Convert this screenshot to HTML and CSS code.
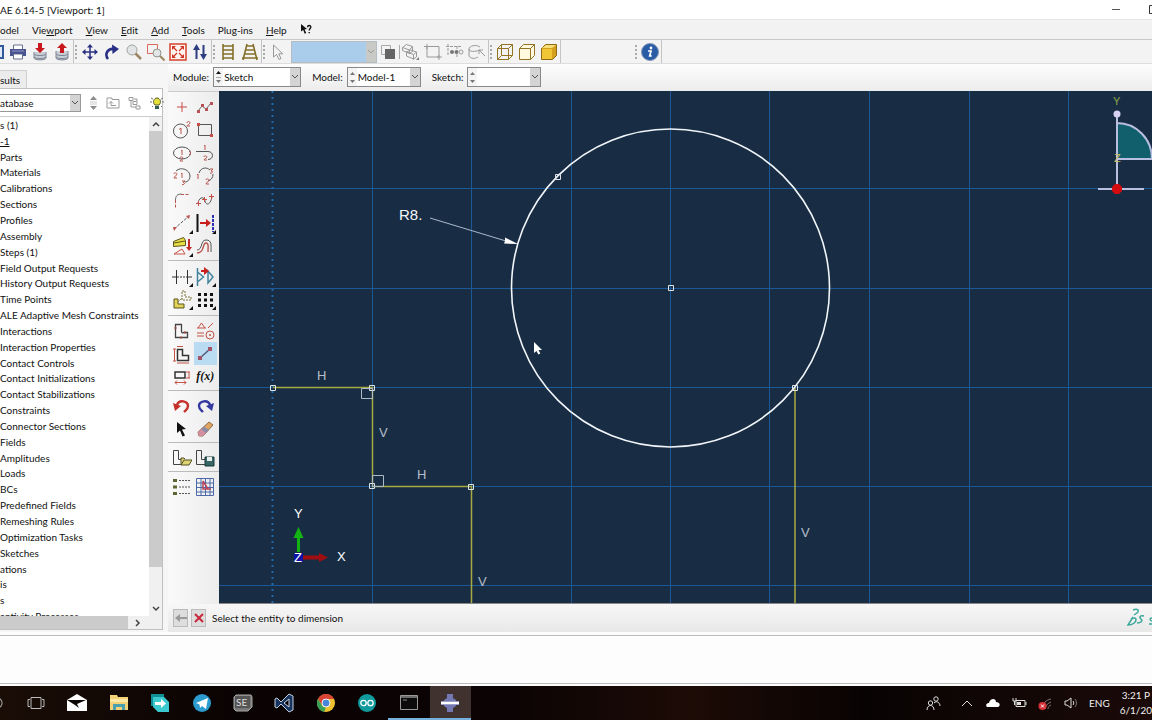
FILE: index.html
```html
<!DOCTYPE html>
<html lang="en">
<head>
  <meta charset="UTF-8">
  <meta name="viewport" content="width=device-width, initial-scale=1.0">
  <title>Abaqus/CAE 6.14-5 [Viewport: 1]</title>
  <link rel="stylesheet" href="styles.css">
</head>
<body>
<div class="app">

  <header class="titlebar">
    <span>AE 6.14-5 [Viewport: 1]</span>
    <div class="window-buttons">
      <button aria-label="Minimize"><svg width="9" height="9"><path d="M0 4.500h8" stroke="#555"/></svg></button>
      <button aria-label="Maximize"><svg width="9" height="9"><path d="M.5 .5h8v8h-8z" stroke="#333"/></svg></button>
    </div>
  </header>

  <nav class="menubar">
    <button>odel</button>
    <button>Vie<u>w</u>port</button>
    <button><u>V</u>iew</button>
    <button><u>E</u>dit</button>
    <button><u>A</u>dd</button>
    <button><u>T</u>ools</button>
    <button>Plu<u>g</u>-ins</button>
    <button><u>H</u>elp</button>
    <button aria-label="Help on context"><svg width="12" height="12" viewBox="0 0 12 12"><path d="M1 0l6 5-2.500.4 1.800 3.600-1.600.7-1.500-3.700L1 7.500z" fill="#111"/><path d="M7.500 3.200c.2-2.200 3.500-2.200 3.300 0-.1 1.200-1.600 1.500-1.600 3.200M9.200 8v1.300" stroke="#111" stroke-width="1.400"/></svg></button>
  </nav>

  <!-- main toolbar -->
  <div class="toolbar">
    <div class="group">
      <button class="cut" aria-label="Save"><svg width="7" height="18"><path d="M0 3h3v12H0" fill="#dfe8f5" stroke="#30589a" stroke-width="2"/></svg></button>
      <button aria-label="Print"><svg viewBox="0 0 18 18"><path d="M4.500 6V2h9v4M4.500 11h9v5h-9z" fill="#fff" stroke="#66708c"/><path d="M1 6h16v7h-3v-2H4v2H1z" fill="#4a5590"/><path d="M3 8h12" stroke="#8e98c8"/></svg></button>
      <button aria-label="Import"><svg viewBox="0 0 18 18"><path d="M3 9v6c0 2.500 12 2.500 12 0V9" fill="#c9ced6" stroke="#7b8594"/><path d="M3 11c1 2 11 2 12 0M3 14c1 2 11 2 12 0" stroke="#7b8594"/><path d="M7 0h4v5h3L9 10 4 5h3z" fill="#c8171d"/></svg></button>
      <button aria-label="Export"><svg viewBox="0 0 18 18"><path d="M3 8v7c0 2.500 12 2.500 12 0V8" fill="#c9ced6" stroke="#7b8594"/><path d="M3 11c1 2 11 2 12 0M3 14c1 2 11 2 12 0" stroke="#7b8594"/><path d="M7 10h4V5h3L9 0 4 5h3z" fill="#c8171d"/></svg></button>
    </div>
    <div class="group grip">
      <button aria-label="Pan view"><svg viewBox="0 0 18 18"><path d="M9 3v12M3 9h12" stroke="#2b3181" stroke-width="1.500"/><path d="M9 1l3 3.500H6zM9 17l3-3.500H6zM1 9l3.500-3v6zM17 9l-3.500-3v6z" fill="#2b3181"/></svg></button>
      <button aria-label="Rotate view"><svg viewBox="0 0 18 18"><path d="M5 16C1 11 5 5 11 6" stroke="#2a2f86" stroke-width="2.600"/><path d="M9 1.500L16 6l-6.500 5z" fill="#2a2f86"/></svg></button>
      <button aria-label="Magnify view"><svg viewBox="0 0 18 18"><path d="M10 10l6 6" stroke="#9a8660" stroke-width="2.500"/><circle cx="7" cy="7" r="5" fill="#e2e5e6" stroke="#a2a49e"/></svg></button>
      <button aria-label="Box zoom view"><svg viewBox="0 0 18 18"><path d="M.5 1.500h10v9H.5z" stroke="#d8695c"/><path d="M12.500 12.500l5 5" stroke="#9a8660" stroke-width="2"/><circle cx="10" cy="10" r="4" fill="#e2e5e6" stroke="#94958e"/></svg></button>
      <button aria-label="Auto-fit view"><svg viewBox="0 0 18 18"><path d="M1 1h16v16H1z" fill="#fff3ef" stroke="#d3432d" stroke-width="1.500"/><path d="M3 3h4L3 7zM15 3v4l-4-4zM3 15v-4l4 4zM15 15h-4l4-4z" fill="#cf3524"/><path d="M4 4l4 4M14 4l-4 4M4 14l4-4M14 14l-4-4" stroke="#cf3524" stroke-width="1.200"/></svg></button>
      <button aria-label="Cycle views"><svg viewBox="0 0 18 18"><path d="M5.500 16V5M12.500 2v11" stroke="#2d3d82" stroke-width="2"/><path d="M5.500 1L9 7H2zM12.500 17L9 11h7z" fill="#2d3d82"/></svg></button>
    </div>
    <div class="group grip">
      <button aria-label="Parallel view"><svg viewBox="0 0 18 18"><path d="M4 1v16M14 1v16M4 3h10M4 7h10M4 11h10M4 15h10" stroke="#85702a" stroke-width="1.600"/></svg></button>
      <button aria-label="Perspective view"><svg viewBox="0 0 18 18"><path d="M6 1L2 17M12 1l4 16M5 3h8M4 7h10M3 11h12M1 15h16" stroke="#85702a" stroke-width="1.600"/></svg></button>
    </div>
    <div class="group grip">
      <button aria-label="Select"><svg viewBox="0 0 18 18"><path d="M4.500 2v12l3-2.500 2.500 5 2-1-2.300-4.700h4z" fill="#f4f4f4" stroke="#999"/></svg></button>
      <select class="filter" aria-label="Selection filter"><option></option></select>
      <button aria-label="Selection options"><svg viewBox="0 0 18 18"><path d="M2.500 2.500h9v9h-9z" stroke="#aaa"/><path d="M6 6h10v10H6z" fill="#666"/></svg></button>
      <i class="rule"></i>
      <button aria-label="Drag shape"><svg viewBox="0 0 18 18"><path d="M.5 4.500l4-3 6 2v5l-3 2-7-3zM.5 4.500l7 2.500 3-3.500M4.500 9l4-2 6 2v5l-3 2-7-3zM4.500 9l7 2.500 3-2.500M11.500 11.500v5M7.500 7v4" stroke="#999"/><path d="M17 14v3h-3z" fill="#777"/></svg></button>
      <button aria-label="Entity select"><svg viewBox="0 0 18 18"><path d="M3 3.500h12V14H3zM0 3.500h5M3 1v5M13 14h5M15 12v5" stroke="#999"/></svg></button>
      <button aria-label="Selection scope"><svg viewBox="0 0 18 18"><path d="M2 1v12M0 3.500h16M11 3v12" stroke="#999" stroke-dasharray="3 1"/><circle cx="6" cy="9" r="2" fill="#777"/><circle cx="10.500" cy="9" r="2" fill="#777"/><circle cx="15" cy="9" r="2" stroke="#999"/></svg></button>
      <button aria-label="Select closest"><svg viewBox="0 0 18 18"><path d="M12 4C8 1 1 3 1 6s6 3 11 1M1 6v7c2 3 6 3 9 1M11 7l6 6M11 7v4M11 7h4" stroke="#999"/></svg></button>
    </div>
    <div class="group grip">
      <button aria-label="Wireframe"><svg viewBox="0 0 18 18"><path d="M1.500 5.500h11v11h-11zM5.500 1.500h11v11h-11zM1.500 5.500l4-4M12.500 5.500l4-4M1.500 16.500l4-4M12.500 16.500l4-4" stroke="#947322"/></svg></button>
      <button aria-label="Hidden"><svg viewBox="0 0 18 18"><path d="M1.500 5.500h11v11h-11zM1.500 5.500l4-4h11v11l-4 4M12.500 5.500l4-4" fill="#fff9e0" stroke="#947322"/></svg></button>
      <button aria-label="Shaded"><svg viewBox="0 0 18 18"><path d="M1.500 5.500l4-4h11v11l-4 4h-11z" fill="#d4a01e" stroke="#8e6a12"/><path d="M2 6h10v10H2z" fill="#f0c637"/><path d="M2 5l4-3h10l-4 3z" fill="#f8de78"/></svg></button>
    </div>
    <div class="group grip info">
      <button aria-label="Query information"><svg viewBox="0 0 18 18"><circle cx="9" cy="9" r="8.500" fill="#2a5ca6" stroke="#8496b4"/><circle cx="10" cy="5" r="1.400" fill="#fff"/><path d="M7 8h3l-1.300 5h2" stroke="#fff" stroke-width="1.700"/></svg></button>
    </div>
  </div>

  <main class="workspace">

    <aside class="side">
      <div class="tabs"><button>sults</button></div>
      <div class="panel">
        <div class="panel-head">
          <select class="combo" aria-label="Database"><option>atabase</option></select>
          <button aria-label="Previous or next"><svg width="9" height="16" viewBox="0 0 9 16"><path d="M4.500 1L8 5H1zM4.500 15L8 11H1z" fill="#8b8b8b"/><path d="M1 7h7M1 9h7" stroke="#ccc"/></svg></button>
          <button aria-label="Up one level"><svg width="14" height="14" viewBox="0 0 14 14"><path d="M1 3.500V2h5v1.500h7v8.500H1zM10 9.500H5V5.500M3 7.500l2-2 2 2" stroke="#999"/></svg></button>
          <button aria-label="Link tree"><svg width="14" height="14" viewBox="0 0 14 14"><path d="M1 1.500h4v3H1zM5 5.500h4v3H5zM8 10h4v3H8zM3 4.500V11h5M6 3h3v2" stroke="#999"/></svg></button>
          <button aria-label="Tip"><svg width="14" height="14" viewBox="0 0 14 14"><path d="M1 2l2 1M13 2l-2 1M0 6h2M14 6h-2M2 11l1-1M12 11l-1-1" stroke="#777"/><path d="M5 9C2 6 4 2 7 2s5 4 2 7z" fill="#e4e23a" stroke="#55582c"/><path d="M5 10h4v3H5z" fill="#2f5d54"/></svg></button>
        </div>
        <div class="tree-row">
          <ul class="tree">
            <li>s (1)</li>
            <li><u>-1</u></li>
            <li>Parts</li>
            <li>Materials</li>
            <li>Calibrations</li>
            <li>Sections</li>
            <li>Profiles</li>
            <li>Assembly</li>
            <li>Steps (1)</li>
            <li>Field Output Requests</li>
            <li>History Output Requests</li>
            <li>Time Points</li>
            <li>ALE Adaptive Mesh Constraints</li>
            <li>Interactions</li>
            <li>Interaction Properties</li>
            <li>Contact Controls</li>
            <li>Contact Initializations</li>
            <li>Contact Stabilizations</li>
            <li>Constraints</li>
            <li>Connector Sections</li>
            <li>Fields</li>
            <li>Amplitudes</li>
            <li>Loads</li>
            <li>BCs</li>
            <li>Predefined Fields</li>
            <li>Remeshing Rules</li>
            <li>Optimization Tasks</li>
            <li>Sketches</li>
            <li>ations</li>
            <li>is</li>
            <li>s</li>
            <li>aptivity Processes</li>
          </ul>
          <div class="vscroll">
            <button aria-label="Scroll up"><svg width="8" height="6"><path d="M1 5l3-3 3 3" stroke="#444" stroke-width="1.500"/></svg></button>
            <div class="thumb"></div>
            <button aria-label="Scroll down"><svg width="8" height="6"><path d="M1 1l3 3 3-3" stroke="#444" stroke-width="1.500"/></svg></button>
          </div>
        </div>
        <div class="hscroll">
          <div class="thumb"></div>
          <button aria-label="Scroll right"><svg width="6" height="8"><path d="M1 1l3 3-3 3" stroke="#444" stroke-width="1.500"/></svg></button>
        </div>
      </div>
    </aside>

    <section class="main">
      <div class="context">
        <label for="module">Module:</label>
        <div class="picker picker-module"><svg width="7" height="14"><path d="M3.500 1L6 4H1z" fill="#111"/><path d="M3.500 13L6 10H1z" fill="#777"/><path d="M1 7.500h5" stroke="#aaa"/></svg><select class="combo" id="module"><option>Sketch</option></select></div>
        <label for="model">Model:</label>
        <div class="picker"><svg width="7" height="14"><path d="M3.500 2L6 5H1zM3.500 13L6 10H1z" fill="#777"/></svg><select class="combo" id="model"><option>Model-1</option></select></div>
        <label for="sketch">Sketch:</label>
        <div class="picker"><svg width="7" height="14"><path d="M3.500 2L6 5H1zM3.500 13L6 10H1z" fill="#777"/></svg><select class="combo" id="sketch"><option></option></select></div>
      </div>

      <div class="stage">
        <div class="toolbox">
          <div class="tools draw-tools">
            <button aria-label="Create isolated point"><svg viewBox="0 0 20 20"><path d="M10 5v10M5 10h10" stroke="#c84c48"/></svg></button>
            <button aria-label="Create lines"><svg viewBox="0 0 20 20"><path d="M3 14l4-5 4 3 6-7" stroke="#666"/><path d="M2 13h3v3H2zM6 7h3v3H6zM10 11h3v3h-3zM15 5h3v3h-3z" fill="#b85058"/></svg></button>
            <button aria-label="Create circle"><svg viewBox="0 0 20 20"><circle cx="8.500" cy="11" r="7" stroke="#555"/><path d="M7 9.500L9 8v6M15 3c0-2 3-2 3 0 0 1-3 2-3 3h3" stroke="#b9544f"/></svg></button>
            <button aria-label="Create rectangle"><svg viewBox="0 0 20 20"><path d="M3.500 4.500h13v11h-13z" stroke="#555"/><path d="M2 3h3v3H2zM15 14h3v3h-3z" fill="#c84c48"/></svg></button>
            <button aria-label="Create ellipse"><svg viewBox="0 0 20 20"><ellipse cx="10" cy="10" rx="8.500" ry="6" stroke="#555"/><path d="M9 8l1-1v5M8 15c0-2 3-1 3 0 0 1-3 2-3 3h3M17 8l2 2-2 2" stroke="#b9544f"/></svg></button>
            <button aria-label="Create tangent arc"><svg viewBox="0 0 20 20"><path d="M1 8.500h12c6 0 6 8 0 8" stroke="#555"/><path d="M9 3l1-1v5M9 14c0-2 3-1 3 0 0 1-3 2-3 3h3" stroke="#b9544f"/></svg></button>
            <button aria-label="Create arc by center"><svg viewBox="0 0 20 20"><path d="M4 5c5-5 14-1 14 5 0 3-2 6-5 6" stroke="#555"/><path d="M9 8l1-1v5M2 8c0-2 3-1 3 0 0 1-3 3-3 4h3M10 15h3l-2 1.500c3 0 1 3-1 2" stroke="#b9544f"/></svg></button>
            <button aria-label="Create arc by points"><svg viewBox="0 0 20 20"><path d="M4 7c2-6 8-6 11-3M18 8c0 4-2 6-5 7" stroke="#555"/><path d="M2 9l1-1v5M15 3h3l-2 2c3 0 1 3-1 2M11 14c0-2 3-1 3 0 0 1-3 3-3 4h3" stroke="#b9544f"/></svg></button>
            <button aria-label="Create fillet"><svg viewBox="0 0 20 20"><path d="M3.500 11v-1c0-4 2-6 6-6" stroke="#666"/><path d="M9 4.500h9M3.500 10v8" stroke="#b9544f" stroke-dasharray="3 1.500"/></svg></button>
            <button aria-label="Create spline"><svg viewBox="0 0 20 20"><path d="M3 13c1-6 6-7 7-2s6 4 7-5" stroke="#555"/><path d="M1 13.500h5M3.500 11v5M7 9.500h5M9.500 7v5M14 6.500h5M16.500 4v5" stroke="#c84c48"/></svg></button>
            <button class="more" aria-label="Create construction line"><svg viewBox="0 0 20 20"><path d="M2 16L17 3" stroke="#556" stroke-dasharray="3 1.500"/><path d="M1 14l4 0-3 4zM14 3l4-1-1 4z" fill="#b9544f"/></svg></button>
            <button class="more" aria-label="Project edges"><svg viewBox="0 0 20 20"><path d="M2.500 1v18" stroke="#111" stroke-width="2"/><path d="M5 10h7" stroke="#c9201e" stroke-width="2"/><path d="M11 6l5 4-5 4z" fill="#c9201e"/><path d="M18 2v17" stroke="#2c31b4" stroke-width="2" stroke-dasharray="3 1"/></svg></button>
            <button class="more" aria-label="Offset curves"><svg viewBox="0 0 20 20"><path d="M1.500 5.500l10-4 2 3v5l-12 1z" fill="#e7df43" stroke="#5a541b"/><path d="M2 7l11-2" stroke="#5a541b"/><path d="M2 18l8-5 3 5z" stroke="#c45246"/><path d="M17 3v9" stroke="#c32c29" stroke-width="2"/><path d="M14 11h6l-3 4z" fill="#c32c29"/></svg></button>
            <button aria-label="Offset"><svg viewBox="0 0 20 20"><path d="M2 14c6 0 3-10 9-10 6 0 5 5 5 12" stroke="#555"/><path d="M2 17c8 0 5-10 9-10 3 0 2 4 2 9" stroke="#b9544f" stroke-width="1.400"/></svg></button>
          </div>
          <div class="tools edit-tools">
            <button class="more" aria-label="Trim"><svg viewBox="0 0 20 20"><path d="M4.500 3v14M15.500 3v14M0 10h5M15 10h5" stroke="#333"/><path d="M5 10h10" stroke="#333" stroke-dasharray="2 1"/></svg></button>
            <button class="more" aria-label="Mirror"><svg viewBox="0 0 20 20"><path d="M2.500 1v18M2.500 5l6 5-6 5M13 4v12l5-6z" stroke="#42839c" stroke-width="1.500"/><path d="M6 4h4" stroke="#c9201e" stroke-width="2"/><path d="M9 0l5 4-5 4z" fill="#c9201e"/></svg></button>
            <button class="more" aria-label="Translate"><svg viewBox="0 0 20 20"><path d="M2 9h4v5h6v4H2z" fill="#e1d25a" stroke="#5a541b"/><path d="M10 1h3v6h6v3h-9zM6 12l4-4" stroke="#7a7238" stroke-dasharray="2 1"/></svg></button>
            <button class="more" aria-label="Pattern"><svg viewBox="0 0 20 20"><path d="M3 4.500h3M9 4.500h3M15 4.500h3M3 10h3M9 10h3M15 10h3M3 15.500h3M9 15.500h3M15 15.500h3" stroke="#111" stroke-width="3"/></svg></button>
          </div>
          <div class="tools">
            <button aria-label="Edit sketch"><svg viewBox="0 0 20 20"><path d="M3.500 3.500h6v7c0 1 1 2 2 1h4v5h-12z" stroke="#444" stroke-width="1.300"/><path d="M2 7h3M9 15v3M13 10v3" stroke="#c45246"/></svg></button>
            <button aria-label="Add constraint"><svg viewBox="0 0 20 20"><path d="M2 7h9M3 7l3.500-5L10 7M13 7l5-5M2 12h7M2 15h7" stroke="#c45246"/><circle cx="15" cy="14" r="4" stroke="#c45246"/><circle cx="15" cy="14" r="1" fill="#c45246"/></svg></button>
            <button aria-label="Auto-constrain"><svg viewBox="0 0 20 20"><path d="M5.500 5.500h5v6h6v5h-11z" stroke="#333" stroke-width="1.500"/><path d="M5 2.500h6M2.500 5v12M5 19h12M1 5h3M1 17h3" stroke="#c45246"/></svg></button>
            <button class="selected" aria-label="Add dimension"><svg viewBox="0 0 20 20"><path d="M5 14L15 5" stroke="#505a78" stroke-width="1.500"/><path d="M3 12h4v4H3zM13 3h4v4h-4z" fill="#a45468"/></svg></button>
            <button aria-label="Edit dimension"><svg viewBox="0 0 20 20"><path d="M3 5h10v6H3z" stroke="#333" stroke-width="1.500"/><path d="M14 5h4M14 11h4M17 5v6M3 15.500h11M5 13.500l-2 2 2 2M12 13.500l2 2-2 2" stroke="#c45246"/></svg></button>
            <button class="fx" aria-label="Parameter manager">f(x)</button>
          </div>
          <div class="tools">
            <button aria-label="Undo"><svg viewBox="0 0 20 20"><path d="M5 9c2-6 11-4 11 1 0 3-2 4-4 6" stroke="#c5302b" stroke-width="2.400"/><path d="M1 7l8 3-6 5z" fill="#c5302b"/></svg></button>
            <button aria-label="Redo"><svg viewBox="0 0 20 20"><path d="M15 9C13 3 4 5 4 10c0 3 2 4 4 6" stroke="#3338a0" stroke-width="2.400"/><path d="M19 7l-8 3 6 5z" fill="#3338a0"/></svg></button>
            <button aria-label="Select entities"><svg viewBox="0 0 20 20"><path d="M5 3l9 7-4 .5 3 6-2.500 1-2.500-6L5 14z" fill="#111"/></svg></button>
            <button aria-label="Delete"><svg viewBox="0 0 20 20"><path d="M3 13L14 3l4 3L8 17H4z" fill="#dfa45e" stroke="#8b6a4a"/><path d="M3 13l3-3 5 4-3 3H4z" fill="#d58fa3"/><path d="M6 10l3-2.500 5 3.500-3 3z" fill="#8b8aa8"/></svg></button>
          </div>
          <div class="tools">
            <button aria-label="Open sketch"><svg viewBox="0 0 20 20"><path d="M1.500 2.500h5v9h5v5h-10z" stroke="#444"/><path d="M9 17l3-5h8l-3 5zM9 16v-6h3l1 1" fill="#ddd373" stroke="#555022"/></svg></button>
            <button aria-label="Save sketch"><svg viewBox="0 0 20 20"><path d="M1.500 2.500h5v9h5v5h-10z" stroke="#444"/><path d="M10 9h9v9h-9z" fill="#376664" stroke="#173a3a"/><path d="M12 9h5v4h-5z" fill="#e8efee"/></svg></button>
          </div>
          <div class="tools">
            <button aria-label="Sketch manager"><svg viewBox="0 0 20 20"><path d="M1 3.500h4M1 10h4M1 16.500h4" stroke="#5e6432" stroke-width="3"/><path d="M7 3.500h12M7 10h12M7 16.500h12" stroke="#555" stroke-dasharray="2 1"/></svg></button>
            <button aria-label="Sketcher options"><svg viewBox="0 0 20 20"><path d="M1.500 1.500h17v17h-17zM6 1v18M10.500 1v18M15 1v18M1 6h18M1 10.500h18M1 15h18" stroke="#4d68a8"/><path d="M8 4v8h8M8 4l5 8" stroke="#b9445a" stroke-width="1.500"/></svg></button>
          </div>
        </div>

        <div class="viewport">
          <svg class="canvas" width="100%" height="100%">
            <!-- grid -->
            <g stroke="#1c5896">
              <path d="M153.500 0v2000M252.500 0v2000M352.500 0v2000M451.500 0v2000M550.500 0v2000M650.500 0v2000M750.500 0v2000M849.500 0v2000"/>
              <path d="M0 97.500h3000M0 197.500h3000M0 296.500h3000M0 395.500h3000M0 494.500h3000"/>
            </g>
            <path d="M53.500 0v2000" stroke="#2568a8" stroke-width="2" stroke-dasharray="2 4"/>
            <!-- sketch profile -->
            <path d="M54 296.500h99.500v99h99V2000M576 296.500V2000" stroke="#a6aa40" stroke-width="1.500"/>
            <circle cx="451.500" cy="197" r="159" stroke="#f2f6fa" stroke-width="1.600"/>
            <g stroke="#dfe5ea">
              <path d="M51.500 294.500h5v5h-5zM150.500 294.500h5v5h-5zM150.500 392.500h5v5h-5zM249.500 393.500h5v5h-5zM573.500 294.500h5v5h-5zM336.500 83.500h5v5h-5zM449.500 194.500h5v5h-5z"/>
              <path d="M142.500 297.500h11v10h-11zM153.500 384.500h11v11h-11z" stroke="#aebac6"/>
            </g>
            <g class="marks">
              <text x="98" y="289">H</text>
              <text x="160" y="346">V</text>
              <text x="198" y="388">H</text>
              <text x="259" y="495">V</text>
              <text x="582" y="446">V</text>
            </g>
            <!-- radius dimension -->
            <text class="radius" x="180" y="129">R8.</text>
            <path d="M211 127l76 23" stroke="#a9bacb"/>
            <path d="M299 153l-13-6.500v3.500l-1 2.500z" fill="#fff"/>
            <!-- axis triad -->
            <path d="M79.500 461v-16" stroke="#12b412" stroke-width="3"/>
            <path d="M79.500 436l5 11h-10z" fill="#12b412"/>
            <path d="M84 466.500h19" stroke="#a00e12" stroke-width="4"/>
            <path d="M100 462l9 4.500-9 4.500z" fill="#a00e12"/>
            <path d="M75 462h9v9h-9z" fill="#0c12a8"/>
            <g class="axes">
              <text x="75" y="427">Y</text>
              <text x="118" y="470">X</text>
              <text x="75" y="471">Z</text>
            </g>
            <path d="M315 251v11l2.500-2 1.800 3.500 2-1-1.800-3.500h3.500z" fill="#fff"/>
          </svg>
          <svg class="compass" width="56" height="104" viewBox="0 0 56 104">
            <path d="M21 32a35 36 0 0 1 35 36H21z" fill="#115f6c"/>
            <path d="M21 32a35 36 0 0 1 35 36H21M21 23v75M2 98h46" stroke="#b9bfe0" stroke-width="2"/>
            <circle cx="21" cy="23" r="3.500" fill="#d6d0f2"/>
            <path d="M19 93h4l3 3v4l-3 3h-4l-3-3v-4z" fill="#d40c10"/>
            <text x="17" y="14" fill="#8ea646">Y</text>
            <text x="18" y="71" fill="#c9bb58">Z</text>
          </svg>
        </div>
      </div>

      <div class="prompt">
        <button aria-label="Back" disabled><svg width="12" height="10"><path d="M0 5l5-4v3h7v2H5v3z" fill="#999"/></svg></button>
        <button aria-label="Cancel"><svg width="10" height="10"><path d="M1 1l8 8M9 1L1 9" stroke="#c8283a" stroke-width="2"/></svg></button>
        <span>Select the entity to dimension</span>
        <svg class="brand" width="26" height="20" viewBox="0 0 26 20"><path d="M7 2c4-2 7 0 4 3L8 7M7 9l-5 8c5 0 8-3 8-5 0-3-3-2-5-1M18 8c-4-1-5 1-3 3s0 4-4 4M26 10c-3 0-2 3 0 3M23 16h3" stroke="#3ba89c" stroke-width="1.500"/></svg>
      </div>
    </section>
  </main>

  <div class="messages"></div>

  <footer class="taskbar">
    <div class="cortana"></div>
    <div class="apps">
      <button aria-label="Task view"><svg viewBox="0 0 20 20"><path d="M5 4.500h10v11H5zM4 6.500H2v7h2M16 6.500h2v7h-2" stroke="#bbb"/></svg></button>
      <button aria-label="Mail"><svg viewBox="0 0 20 20"><path d="M0 7l10-6 10 6v11H0z" fill="#fff"/><path d="M0 7h19l-9 4 2 4-4-3z" fill="#0b0504"/></svg></button>
      <button aria-label="File Explorer"><svg viewBox="0 0 20 20"><path d="M1 2h7l1 2h10v13H1z" fill="#f3d277"/><path d="M1 6h18v3H1z" fill="#fae7a4"/><path d="M4 11h12v6h-3v-3H7v3H4z" fill="#4aa0b0"/></svg></button>
      <button aria-label="Transfer"><svg viewBox="0 0 20 20"><path d="M1 1h13v12H1z" fill="#0f8e94"/><path d="M3 4h11l5 5v10H8l-5-5z" fill="#3cc9cf"/><path d="M5 9h6V6l5 4.500-5 4.500v-3H5z" fill="#fff"/></svg></button>
      <button aria-label="Telegram"><svg viewBox="0 0 20 20"><circle cx="10" cy="10" r="9" fill="#2b9bd0"/><path d="M4 10l12-5-2 11-4-3-2 2-.5-3.500z" fill="#fff"/></svg></button>
      <button aria-label="SE"><svg viewBox="0 0 20 20"><path d="M3 2h15l1 2v10l-4 4H3l-2-2V4z" fill="#777" stroke="#aaa"/><path d="M2 3h15v12H2z" fill="#555"/><text x="3" y="13">SE</text></svg></button>
      <button aria-label="Visual Studio"><svg viewBox="0 0 20 20"><path d="M1 6l2-1 4 4 8-8 4 2v14l-4 2-8-8-4 4-2-1zM15 6l-5 4 5 4z" fill="#16345e" fill-rule="evenodd" stroke="#c7d0e0"/></svg></button>
      <button aria-label="Chrome"><svg viewBox="0 0 20 20"><circle cx="10" cy="10" r="9" fill="#f0c230"/><path d="M2 6a9 9 0 0 1 16 0h-8l-4 6z" fill="#d94435"/><path d="M2 6l5 8 3 .5L8 19A9 9 0 0 1 2 6z" fill="#3ba056"/><circle cx="10" cy="10" r="4" fill="#4a86d8" stroke="#f5f5f5"/></svg></button>
      <button aria-label="Arduino"><svg viewBox="0 0 20 20"><circle cx="10" cy="10" r="9" fill="#109a9d"/><circle cx="6.500" cy="10" r="2.700" stroke="#fff" stroke-width="1.300"/><circle cx="13.500" cy="10" r="2.700" stroke="#fff" stroke-width="1.300"/></svg></button>
      <button class="open" aria-label="Command Prompt"><svg viewBox="0 0 20 20"><path d="M1.500 3.500h17v14h-17z" fill="#0c0c0c" stroke="#999"/><path d="M2 5h16" stroke="#ccc"/><path d="M4 8h4" stroke="#888"/></svg></button>
      <button class="open active" aria-label="Abaqus"><svg viewBox="0 0 20 20"><path d="M7 2h6v4l3 2v6l-3 2v4H7v-4l-3-2V8l3-2z" fill="#7378b2"/><path d="M1 9h18v4H1z" fill="#9ba0cf"/><path d="M1 11h18" stroke="#fff" stroke-width="2"/></svg></button>
    </div>
    <div class="tray">
      <button class="people" aria-label="People"><svg viewBox="0 0 16 16"><circle cx="5.500" cy="8" r="2.200" stroke="#ddd"/><path d="M2 15c0-6 7-6 7 0M9 8c3-3 6 0 6 3" stroke="#ddd"/><circle cx="11" cy="4" r="2.200" stroke="#ddd"/></svg></button>
      <button aria-label="Show hidden icons"><svg viewBox="0 0 16 16"><path d="M3 11l5-5 5 5" stroke="#ddd"/></svg></button>
      <button aria-label="OneDrive"><svg viewBox="0 0 16 16"><path d="M2 12c-2-2 0-4 2-4 1-5 7-5 7-1 4 0 5 4 2 5z" fill="#fff"/></svg></button>
      <button aria-label="Battery"><svg viewBox="0 0 16 16"><path d="M5 5.500h9v6H5zM15 7v3" stroke="#ddd"/><path d="M6 7h4v3H6z" fill="#ddd"/><path d="M2 3v3h3V3M3.500 6v4" stroke="#ddd"/></svg></button>
      <button aria-label="Network"><svg viewBox="0 0 16 16"><path d="M5 14C6 8 9 5 14 4M8 14c1-4 3-6 6-7M11 14c0-2 1-3 3-4" stroke="#8a7676"/><circle cx="5.500" cy="11" r="4" fill="#d62f36"/><path d="M4 9.500l3 3M7 9.500l-3 3" stroke="#fff"/></svg></button>
      <button aria-label="Volume"><svg viewBox="0 0 16 16"><path d="M2 6h2l4-3v10l-4-3H2zM10 6c1 1 1 3 0 4" stroke="#ddd"/><path d="M12 4c2 2 2 6 0 8" stroke="#777"/></svg></button>
      <button class="lang">ENG</button>
      <div class="clock"><span>3:21 P</span><span>6/1/20</span></div>
    </div>
  </footer>
</div>
</body>
</html>
```

FILE: styles.css
```css
*, *::before, *::after {
  box-sizing: border-box;
}

body {
  margin: 0;
  font-family: Lato, "Open Sans", sans-serif;
  font-size: 10px;
  color: #111;
  background: #fdfdfd;
}

button, select {
  font: inherit;
  color: inherit;
  margin: 0;
  padding: 0;
  border: 0;
  background: none;
}

button {
  display: flex;
  align-items: center;
  justify-content: center;
}

svg {
  display: block;
  fill: none;
  flex: none;
}

.app {
  display: flex;
  flex-direction: column;
  height: 100vh;
  overflow: hidden;
}

/* title and menus */
.titlebar {
  display: flex;
  justify-content: space-between;
  align-items: center;
  height: 19px;
  background: #fff;
}

.window-buttons {
  display: flex;
  gap: 28px;
  margin-right: -6px;
}

.menubar {
  display: flex;
  align-items: center;
  gap: 13px;
  height: 21px;
  background: #f2f2f2;
  border-top: 1px solid #e6e6e6;
  border-bottom: 1px solid #c8c8c8;
}

.menubar button {
  display: block;
}

/* toolbar */
.toolbar {
  display: flex;
  height: 24px;
  background: #f3f3f3;
  border-bottom: 1px solid #ddd;
}

.group {
  display: flex;
  align-items: center;
  border-right: 1px solid #c4c4c4;
}

.group button {
  width: 22px;
  height: 22px;
}

.group .cut {
  width: 7px;
}

.group button:not(.cut) svg {
  width: 18px;
  height: 18px;
}

.grip::before {
  content: "";
  height: 14px;
  margin: 0 2px 0 1px;
  border-left: 2px dotted #aaa;
}

.filter {
  width: 86px;
  height: 22px;
  margin-left: 2px;
  appearance: none;
  border: 1px solid #b5bcc2;
  background: #a9cdeb url("data:image/svg+xml,%3Csvg xmlns='http://www.w3.org/2000/svg' width='10' height='22'%3E%3Cpath d='M0 0h10v22H0z' fill='%23c9c9c5'/%3E%3Cpath d='M2 9l3 3 3-3' fill='none' stroke='%23999'/%3E%3C/svg%3E") right center no-repeat;
}

.rule {
  height: 14px;
  border-left: 1px solid #aaa;
}

.info {
  margin-left: 73px;
}

/* body */
.workspace {
  display: flex;
  flex: 1;
  min-height: 0;
  background: #f6f6f6;
}

.side {
  display: flex;
  flex-direction: column;
  width: 163px;
  padding: 6px 0 2px;
}

.tabs button {
  height: 18px;
  padding-right: 6px;
  background: #ececec;
  border: 1px solid #d0d0d0;
  border-width: 1px 1px 0 0;
}

.panel {
  display: flex;
  flex-direction: column;
  flex: 1;
  min-height: 0;
  background: #fff;
  border: 1px solid #c0c0c0;
  border-left: 0;
}

.panel-head {
  display: flex;
  align-items: center;
  gap: 8px;
  height: 28px;
  border-bottom: 1px solid #ccc;
}

.combo {
  appearance: none;
  height: 18px;
  padding-right: 12px;
  border: 1px solid #999;
  background: #fff url("data:image/svg+xml,%3Csvg xmlns='http://www.w3.org/2000/svg' width='10' height='18'%3E%3Cpath d='M0 0h10v18H0z' fill='%23d4d4d4'/%3E%3Cpath d='M2 7l3 3 3-3' fill='none' stroke='%23555'/%3E%3C/svg%3E") right center no-repeat;
}

.panel-head .combo {
  flex: none;
  width: 81px;
  border-left: 0;
}

.panel-head button + button {
  margin-right: 0;
}

.tree-row {
  display: flex;
  flex: 1;
  min-height: 0;
  overflow: hidden;
}

.tree {
  display: grid;
  grid-auto-rows: 1fr;
  align-items: center;
  flex: 1;
  min-width: 0;
  height: 507px;
  margin: 0;
  padding: 0;
  list-style: none;
  white-space: nowrap;
}

.vscroll {
  display: flex;
  flex-direction: column;
  flex: none;
  width: 13px;
  background: #f0f0f0;
}

.vscroll button {
  height: 14px;
}

.vscroll .thumb {
  height: 436px;
  margin-bottom: auto;
  background: #cbcbcb;
}

.hscroll {
  display: flex;
  height: 13px;
  padding-right: 14px;
  background: #f0f0f0;
}

.hscroll .thumb {
  flex: 1;
  background: #cbcbcb;
}

.hscroll button {
  width: 20px;
}

.main {
  display: flex;
  flex-direction: column;
  flex: 1;
  min-width: 0;
  margin-left: 5px;
}

.context {
  display: flex;
  align-items: center;
  height: 27px;
  padding: 0 0 2px 5px;
  background: linear-gradient(#fdfdfd, #ececec);
}

.picker {
  display: flex;
  align-items: center;
  width: 74px;
  height: 20px;
  margin: 0 11px 0 4px;
  border: 1px solid #888;
  background: #f4f4f4;
}

.picker svg {
  margin: 0 1px;
}

.picker .combo {
  flex: 1;
  min-width: 0;
  padding-left: 1px;
  border: 0;
}

.picker-module {
  width: 88px;
}

.stage {
  display: flex;
  flex: 1;
  min-height: 0;
}

.toolbox {
  width: 51px;
  border-top: 1px solid #ccc;
  background: linear-gradient(90deg, #fafafa, #ececec);
}

.tools {
  display: grid;
  grid-template-columns: 1fr 1fr;
  grid-auto-rows: 1fr;
  padding: 3px 2px 2px;
  border-bottom: 1px solid #bbb;
}

.tools:last-child {
  border-bottom: 0;
}

.draw-tools {
  height: 169px;
}

.edit-tools {
  padding: 4px 2px;
}

.tools button {
  position: relative;
  min-height: 0;
  height: 100%;
}

.tools:not(.draw-tools) button {
  height: 23px;
}

.tools svg {
  width: 20px;
  height: 20px;
}

.more::after {
  content: "";
  position: absolute;
  right: 1px;
  bottom: 1px;
  border: 2px solid #111;
  border-top-color: transparent;
  border-left-color: transparent;
}

.tools .selected {
  background: #b9dcf3;
}

.tools .fx {
  font: italic bold 12px "Liberation Serif", serif;
}

/* drawing area */
.viewport {
  position: relative;
  flex: 1;
  min-width: 0;
  overflow: hidden;
  background: #182d44;
  border-bottom: 1px solid #888;
}

.canvas {
  position: absolute;
  inset: 0;
}

.compass {
  position: absolute;
  top: 0;
  right: 0;
}

.viewport text {
  font-family: "Liberation Sans", sans-serif;
}

.marks text {
  font-size: 13px;
  fill: #b4bfca;
}

.viewport .radius {
  font-size: 15px;
  fill: #f4f7fa;
}

.axes text {
  font-size: 13px;
  fill: #fff;
}

.compass text {
  font-size: 11px;
}

.prompt {
  display: flex;
  align-items: center;
  gap: 3px;
  height: 28px;
  padding-left: 5px;
  background: linear-gradient(#f7f7f7, #e8e8e8);
}

.prompt button {
  width: 15px;
  height: 18px;
  border: 1px solid #bbb;
  background: #ddd;
}

.prompt span {
  margin-left: 3px;
}

.brand {
  margin-left: auto;
}

.messages {
  height: 49px;
  margin: 3px 0 2px;
  border: 1px solid #bbb;
  border-width: 1px 0;
  background: #fdfdfd;
}

/* windows taskbar */
.taskbar {
  display: flex;
  align-items: stretch;
  height: 34px;
  color: #f0f0f0;
  background: linear-gradient(90deg, #1a0d06, #0a0303 20%, #0c0404 45%, #1d0b06 60%, #080303 75%, #1a0a08);
}

.cortana {
  width: 15px;
  background: radial-gradient(circle at -3px 17px, transparent 4px, #aaa 5px, transparent 6px);
}

.apps {
  display: grid;
  grid-template-columns: repeat(11, 1fr);
  width: 456px;
}

.apps svg {
  width: 20px;
  height: 20px;
}

.apps text {
  font-size: 10px;
  fill: #ddd;
}

.open {
  border-bottom: 2px solid #76b0dd;
}

.active {
  background: #40332f;
}

.tray {
  display: flex;
  align-items: center;
  gap: 10px;
  margin-left: auto;
}

.tray svg {
  width: 16px;
  height: 16px;
}

.people {
  margin-right: 8px;
}

.clock {
  text-align: center;
  line-height: 15px;
}

.clock span {
  display: block;
}
```
